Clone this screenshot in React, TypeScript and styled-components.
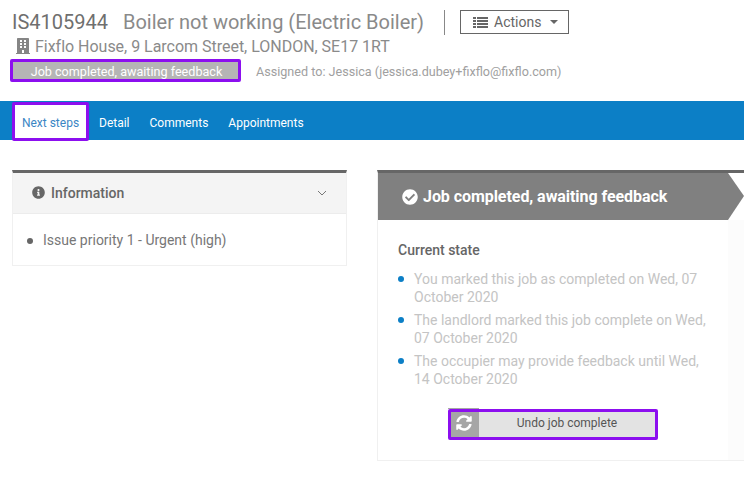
import React from "react";
import styled, { createGlobalStyle } from "styled-components";
import { FaBuilding, FaCheckCircle, FaInfoCircle, FaSyncAlt } from "react-icons/fa";

const Global = createGlobalStyle`
  html, body { margin: 0; padding: 0; background: #fff; }
  body { font-family: Roboto, "Liberation Sans", sans-serif; overflow: hidden; }
  * { box-sizing: border-box; }
`;
const Page = styled.div`width: 744px; height: 503px; overflow: hidden;`;
const Header = styled.header`height: 101px; padding: 9px 0 0 12px;`;
const TitleRow = styled.div`display: flex; align-items: center; height: 26px;`;
const Ref = styled.span`font-size: 20px; color: #6f6f6f; line-height: 26px;`;
const Title = styled.span`font-size: 20px; color: #8a8a8a; margin-left: 15px; line-height: 26px;`;
const Divider = styled.span`width: 1px; height: 25px; background: #888; margin-left: 20px;`;
const ActionsButton = styled.button`
  display: flex; align-items: center; margin-left: 15px; width: 109px; height: 24px;
  padding: 0 0 0 12px; border: 1px solid #666; background: #fff; color: #666;
  font: 14px Roboto, sans-serif;
`;
const ActionsLabel = styled.span`margin-left: 6px;`;
const Caret = styled.span`
  margin-left: 9px; width: 0; height: 0; border-left: 4px solid transparent;
  border-right: 4px solid transparent; border-top: 4px solid #666;
`;
const AddressRow = styled.div`display: flex; align-items: center; height: 22px; margin-left: 3px; font-size: 16px; color: #8a8a8a;`;
const AddressText = styled.span`margin-left: 4px; letter-spacing: -0.02px;`;
const StatusRow = styled.div`display: flex; align-items: center; margin-top: 2px; margin-left: -2px;`;
const StatusChip = styled.span`
  width: 231px; height: 23px; padding-left: 2px; border: 3px solid #8c0fef; border-radius: 2px; background: #b5b5b5;
  color: #fff; font-size: 12.6px; line-height: 19px; text-align: center;
`;
const Assigned = styled.span`margin-left: 15px; font-size: 12.6px; line-height: 20px; padding-top: 2px; color: #a0a0a0;`;
const Nav = styled.nav`display: flex; height: 39px; background: #0c7fc6; padding-left: 12px; overflow: visible;`;
const Tab = styled.a<{ $active?: boolean }>`
  display: flex; align-items: center; justify-content: center; font-size: 12px;
  height: 39px;
  padding: ${p => (p.$active ? "2px 0 0" : "5px 10px 0")};
  width: ${p => (p.$active ? "77px" : "auto")};
  margin-top: ${p => (p.$active ? "1px" : "0")};
  color: ${p => (p.$active ? "#3b86c4" : "#fff")};
  background: ${p => (p.$active ? "#fff" : "transparent")};
  border: ${p => (p.$active ? "3px solid #8c0fef" : "none")};
  border-radius: ${p => (p.$active ? "2px" : "0")};
`;
const Content = styled.main`display: flex; align-items: flex-start; padding: 30px 0 0 12px;`;
const InfoPanel = styled.section`width: 335px; border-top: 3px solid #666; border-left: 1px solid #f0f0f0; border-right: 1px solid #f0f0f0; border-bottom: 1px solid #f0f0f0;`;
const InfoHead = styled.div`
  display: flex; align-items: center; height: 41px; padding: 0 19px 1px 19px; background: #f4f4f4;
  border-bottom: 1px solid #ececec; color: #666; font-size: 14px; font-weight: 500;
`;
const InfoTitle = styled.span`margin-left: 6px; flex: 1;`;
const InfoList = styled.ul`margin: 0; padding: 1px 0 0 14px; height: 51px; display: flex; align-items: center; font-size: 14px; color: #777; list-style: none;`;
const Bullet = styled.li<{ $color: string }>`
  position: relative; padding-left: 16px;
  &::before {
    content: ""; position: absolute; left: 0; top: 6px; width: 6px; height: 6px;
    border-radius: 50%; background: ${p => p.$color};
  }
`;
const StatePanel = styled.section`width: 367px; margin-left: 30px; height: 291px; border-top: 3px solid #666; border-left: 1px solid #f0f0f0; border-bottom: 1px solid #f0f0f0;`;
const StateHead = styled.div`
  display: flex; align-items: center; height: 47px; padding-left: 24px;
  background: #808080; color: #fff; font-size: 16px; font-weight: 700;
  clip-path: polygon(0 0, 350px 0, 366px 23px, 350px 47px, 0 47px);
`;
const StateTitle = styled.span`margin-left: 5px; letter-spacing: -0.06px;`;
const StateBody = styled.div`
  height: 240px; padding: 21px 32px 0 20px;
  background: linear-gradient(to right, #fff 350px, #fcfcfc 350px);
`;
const StateLabel = styled.div`font-size: 14px; font-weight: 500; color: #666; line-height: 18px;`;
const StateList = styled.ul`margin: 11px 0 0; padding: 0; font-size: 14px; line-height: 18px; color: #c4c4c4; list-style: none;`;
const StateItem = styled(Bullet)`margin-bottom: 5px;`;
const UndoButton = styled.button`
  position: relative; display: flex; align-items: stretch; width: 210px; height: 31px; padding: 0;
  margin: 21px 0 0 50px; border: 3px solid #8c0fef; border-radius: 2px; background: #e3e3e3; color: #555;
  font: 12px Roboto, sans-serif;
  &::before {
    content: ""; position: absolute; left: -3px; top: -4px; width: 31px; height: 1px; background: #a6a6a6;
  }
`;
const UndoIcon = styled.span`display: flex; align-items: center; justify-content: center; width: 28px; padding: 0 3px 4px 0; background: #a6a6a6; color: #fff; font-size: 16px;`;
const UndoLabel = styled.span`flex: 1; text-align: center; line-height: 22px;`;

const App = () => (
  <Page>
    <Global />
    <Header>
      <TitleRow>
        <Ref>IS4105944</Ref>
        <Title>Boiler not working (Electric Boiler)</Title>
        <Divider />
        <ActionsButton>
          <svg width="15" height="11" viewBox="0 0 15 11" fill="#666"><path d="M0 0h3v2H0zM4 0h11v2H4zM0 3h3v2H0zM4 3h11v2H4zM0 6h3v2H0zM4 6h11v2H4zM0 9h3v2H0zM4 9h11v2H4z"/></svg>
          <ActionsLabel>Actions</ActionsLabel>
          <Caret />
        </ActionsButton>
      </TitleRow>
      <AddressRow>
        <FaBuilding size={16} color="#858585" />
        <AddressText>Fixflo House, 9 Larcom Street, LONDON, SE17 1RT</AddressText>
      </AddressRow>
      <StatusRow>
        <StatusChip>Job completed, awaiting feedback</StatusChip>
        <Assigned>Assigned to: Jessica (jessica.dubey+fixflo@fixflo.com)</Assigned>
      </StatusRow>
    </Header>
    <Nav>
      <Tab $active>Next steps</Tab>
      <Tab>Detail</Tab>
      <Tab>Comments</Tab>
      <Tab>Appointments</Tab>
    </Nav>
    <Content>
      <InfoPanel>
        <InfoHead>
          <FaInfoCircle size={13} color="#666" />
          <InfoTitle>Information</InfoTitle>
          <svg width="10" height="6" viewBox="0 0 10 6" fill="none" stroke="#777" strokeWidth="1"><path d="M1 1l4 4 4-4"/></svg>
        </InfoHead>
        <InfoList><Bullet $color="#666">Issue priority 1 - Urgent (high)</Bullet></InfoList>
      </InfoPanel>
      <StatePanel>
        <StateHead>
          <FaCheckCircle size={16} color="#fff" />
          <StateTitle>Job completed, awaiting feedback</StateTitle>
        </StateHead>
        <StateBody>
          <StateLabel>Current state</StateLabel>
          <StateList>
            <StateItem $color="#0c7fc6">You marked this job as completed on Wed, 07 October 2020</StateItem>
            <StateItem $color="#0c7fc6">The landlord marked this job complete on Wed, 07 October 2020</StateItem>
            <StateItem $color="#0c7fc6">The occupier may provide feedback until Wed, 14 October 2020</StateItem>
          </StateList>
          <UndoButton>
            <UndoIcon><FaSyncAlt /></UndoIcon>
            <UndoLabel>Undo job complete</UndoLabel>
          </UndoButton>
        </StateBody>
      </StatePanel>
    </Content>
  </Page>
);
export default App;
